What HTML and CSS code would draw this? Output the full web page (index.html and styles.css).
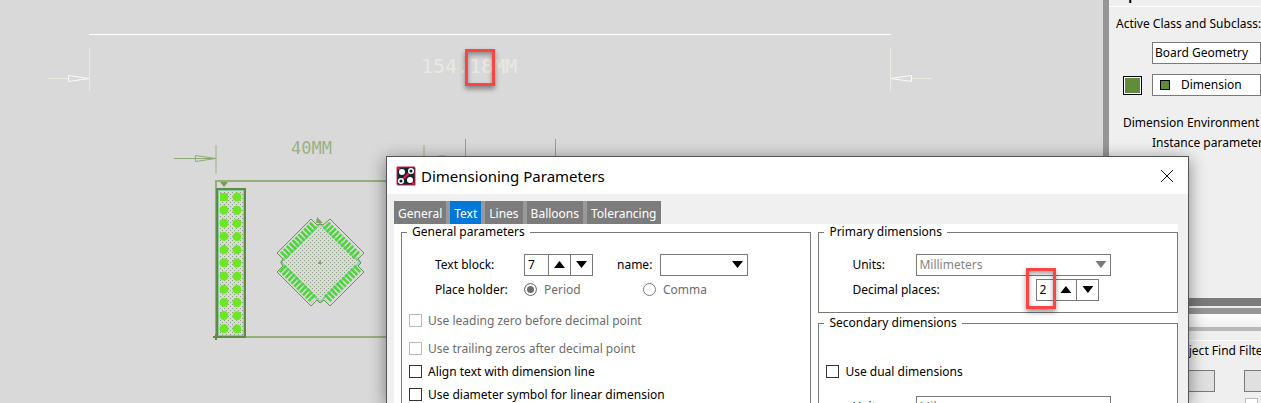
FILE: index.html
```
<!DOCTYPE html>
<html lang="en">
<head>
  <meta charset="UTF-8" />
  <meta name="viewport" content="width=device-width, initial-scale=1.0" />
  <title>Dimensioning Parameters</title>
  <link rel="stylesheet" href="styles.css">
</head>
<body>
  <main class="workspace" aria-label="Board canvas">
    <svg class="board" width="1105" height="403" viewBox="0 0 1105 403" fill="none">
      <defs>
        <pattern id="dots" width="4" height="4" patternUnits="userSpaceOnUse">
          <rect width="1" height="1" fill="#8b9f80" />
          <rect x="2" y="2" width="1" height="1" fill="#8b9f80" />
        </pattern>
      </defs>

      <!-- overall dimension -->
      <path d="M89 34.5H891" stroke="#fff" />
      <path d="M89.5 48V91M890.5 48V91M48 78.5H68M912 78.5H932" stroke="#ebebe2" />
      <path d="M68.500 75.500V81.500L89 78.500ZM911.500 75.500V81.500L891 78.500Z" stroke="#fbfbf8" />
      <text class="dim-text" x="421" y="73">154.18MM</text>

      <!-- 40MM dimension -->
      <path d="M216 145V174M424 145V175" stroke="#b9c7ab" stroke-width="2" />
      <path d="M174 158.500H216M195.500 155.500V161.500L216 158.500ZM465.500 139V180M555.500 139V180" stroke="#8fab75" />
      <path d="M434 157L440 156H446" stroke="#8fab75" />
      <text class="dim-text dim-small" x="291" y="154">40MM</text>

      <!-- board outline -->
      <path d="M600 181H216V337H600" stroke="#96b07c" stroke-width="2" />

      <!-- connector -->
      <path d="M220 182H228L224 187Z" fill="#789c5c" />
      <rect x="217" y="189" width="28" height="148" fill="url(#dots)" stroke="#618b45" stroke-width="2" />
      <rect x="218.500" y="190.500" width="25" height="145" stroke="#86c9a3" />
      <rect x="220" y="193" width="8" height="8" fill="#6be823" />
      <path d="M224 210V334" stroke="#6be823" stroke-width="9" stroke-linecap="round" stroke-dasharray="0 13.200" />
      <path d="M237 197V334" stroke="#6be823" stroke-width="9" stroke-linecap="round" stroke-dasharray="0 13.200" />
      <path d="M213 337H219M216 334V340" stroke="#618b45" stroke-width="2" />

      <!-- QFP package -->
      <path d="M320 224L360 262L320 302L281 262Z" fill="url(#dots)" stroke="#8fd2ae" stroke-width="2" />
      <g stroke="#4fd43c" stroke-width="9" stroke-dasharray="2.600 1.500">
        <path d="M314 225L282 257" />
        <path d="M326 225L358 257" />
        <path d="M282 268L314 300" />
        <path d="M358 268L326 300" />
      </g>
      <path d="M311 219L317 225L320 224L323 225L330 219L364 253L358 259L361 263L358 266L364 272L330 306L324 300L320 303L317 300L311 306L277 272L283 266L281 263L283 259L277 253Z" stroke="#6b9150" />
      <path d="M317 217L323 223L316 223ZM320 260L322 264H318Z" fill="#82a26a" />
    </svg>
    <span class="callout callout-value"></span>
  </main>

  <aside class="sidebar">
    <h2 class="panel-title">Options</h2>
    <section class="options">
      <p>Active Class and Subclass:</p>
      <div class="picker">
        <span class="select-box">
          <select aria-label="Active class"><option>Board Geometry</option></select>
        </span>
      </div>
      <div class="picker">
        <button class="swatch" aria-label="Subclass colour"></button>
        <span class="select-box with-chip">
          <select aria-label="Active subclass"><option>Dimension</option></select>
          <i class="chip"></i>
        </span>
      </div>
      <div class="environment">
        <p>Dimension Environment</p>
        <p class="indent">Instance parameters:</p>
      </div>
    </section>
    <div class="splitter"></div>
    <div class="splitter-thin"></div>
    <div class="panel-tab"></div>
    <section class="find">
      <p>Object Find Filter</p>
      <div class="find-actions">
        <button aria-label="All on"></button>
        <button aria-label="All off"></button>
      </div>
      <input class="find-check" type="checkbox" aria-label="Groups" />
    </section>
  </aside>

  <section class="dialog" role="dialog" aria-labelledby="dialogTitle">
    <header class="titlebar">
      <svg class="app-icon" width="20" height="20" viewBox="0 0 20 20">
        <rect x="1" y="1" width="18" height="18" rx="1" fill="#0b2836" stroke="#d7203f" />
        <path d="M1 1L5 5M15 15L19 19M7 13L13 7" stroke="#e31b3d" stroke-width="2" />
        <circle cx="6" cy="6" r="3" fill="#fff" />
        <circle cx="14" cy="14" r="3" fill="#fff" />
        <circle cx="15" cy="5" r="2.300" fill="#0b2836" stroke="#fff" stroke-width="1.500" />
        <circle cx="5" cy="15" r="2.300" fill="#0b2836" stroke="#fff" stroke-width="1.500" />
      </svg>
      <h1 id="dialogTitle">Dimensioning Parameters</h1>
      <button class="close" aria-label="Close">
        <svg width="12" height="12" viewBox="0 0 12 12"><path d="M0 0L12 12M12 0L0 12" stroke="#111" /></svg>
      </button>
    </header>

    <div class="dialog-body">
      <nav class="tabs" role="tablist">
        <button role="tab">General</button>
        <button role="tab" class="active" aria-selected="true">Text</button>
        <button role="tab">Lines</button>
        <button role="tab">Balloons</button>
        <button role="tab">Tolerancing</button>
      </nav>

      <div class="tab-page">
        <fieldset class="general">
          <legend>General parameters</legend>
          <div class="row first">
            <label class="caption" for="textBlock">Text block:</label>
            <span class="spinner">
              <input id="textBlock" type="text" value="7" />
              <button aria-label="Increase text block"><i class="tri up"></i></button>
              <button aria-label="Decrease text block"><i class="tri"></i></button>
            </span>
            <label class="name-label" for="blockName">name:</label>
            <span class="select-box arrow name-select">
              <select id="blockName"><option></option></select>
              <i class="tri"></i>
            </span>
          </div>
          <div class="row">
            <span class="caption">Place holder:</span>
            <label class="radio"><input type="radio" name="holder" checked disabled />Period</label>
            <label class="radio"><input type="radio" name="holder" disabled />Comma</label>
          </div>
          <div class="checks">
            <label class="check spaced"><input type="checkbox" disabled />Use leading zero before decimal point</label>
            <label class="check"><input type="checkbox" disabled />Use trailing zeros after decimal point</label>
            <label class="check"><input type="checkbox" />Align text with dimension line</label>
            <label class="check"><input type="checkbox" />Use diameter symbol for linear dimension</label>
          </div>
        </fieldset>

        <div class="column">
          <fieldset class="primary">
            <legend>Primary dimensions</legend>
            <div class="row first">
              <label class="caption" for="units">Units:</label>
              <span class="select-box arrow units">
                <select id="units" disabled><option>Millimeters</option></select>
                <i class="tri"></i>
              </span>
            </div>
            <div class="row">
              <label class="caption wide" for="places">Decimal places:</label>
              <span class="spinner narrow">
                <input id="places" type="text" value="2" />
                <button aria-label="Increase decimal places"><i class="tri up"></i></button>
                <button aria-label="Decrease decimal places"><i class="tri"></i></button>
                <span class="callout callout-places"></span>
              </span>
            </div>
          </fieldset>
          <fieldset class="secondary">
            <legend>Secondary dimensions</legend>
            <label class="check"><input type="checkbox" />Use dual dimensions</label>
            <div class="row">
              <label class="caption" for="units2">Units:</label>
              <span class="select-box arrow units">
                <select id="units2" disabled><option>Mils</option></select>
                <i class="tri"></i>
              </span>
            </div>
          </fieldset>
        </div>
      </div>
    </div>
  </section>
</body>
</html>
```
FILE: styles.css
```
:root {
  --canvas: #d9d9d9;
  --panel: #efefef;
  --line: #7a7a7a;
  --muted: #6d6d6d;
  --tab: #7c7c7c;
  --accent: #0078d7;
  --callout: #fb4444;
  --green: #628b3a;
}
* {
  box-sizing: border-box;
  margin: 0;
  padding: 0;
}
body {
  position: relative;
  display: flex;
  height: 100vh;
  overflow: hidden;
  background-color: var(--canvas);
  color: #000;
  font-family: "Noto Sans", sans-serif;
  font-size: 12px;
  line-height: 16px;
  white-space: nowrap;
}
button,
input,
select {
  font: inherit;
  color: inherit;
}
button,
select,
input {
  appearance: none;
  border: 1px solid var(--line);
  border-radius: 0;
  background-color: #fff;
}

/* board canvas */
.workspace {
  position: relative;
  flex: 1;
  min-width: 0;
  overflow: hidden;
}
.board {
  display: block;
}
.dim-text {
  font-family: "DejaVu Sans Mono", monospace;
  font-size: 20px;
  font-weight: 200;
  fill: #e9e9e2;
}
.dim-small {
  font-size: 17px;
  fill: #9bb286;
}
.callout {
  position: absolute;
  border: 3px solid var(--callout);
  box-shadow: 0 3px 5px rgba(0, 0, 0, 0.4), inset 0 3px 5px rgba(0, 0, 0, 0.35);
  pointer-events: none;
}
.callout-value {
  left: 465px;
  top: 49px;
  width: 30px;
  height: 37px;
}
.callout-places {
  left: -10px;
  top: -11px;
  width: 30px;
  height: 41px;
}

/* right hand panels */
.sidebar {
  display: flex;
  flex-direction: column;
  width: 158px;
  overflow: hidden;
  border-left: 6px solid #969696;
  background-color: var(--panel);
}
.panel-title {
  display: flex;
  align-items: flex-end;
  flex: none;
  height: 7px;
  padding: 0 0 3px 9px;
  border-bottom: 1px solid #fff;
  font-size: 13px;
}
.options {
  display: flex;
  flex-direction: column;
  gap: 10px;
  flex: none;
  height: 291px;
  padding: 9px 0 0 7px;
}
.picker {
  display: flex;
  align-items: center;
  justify-content: flex-end;
  gap: 10px;
}
.picker .select-box {
  width: 109px;
}
.swatch {
  width: 19px;
  height: 19px;
  border: 1px solid #000;
  background-color: var(--green);
  box-shadow: inset 0 0 0 1px #fff;
}
.chip {
  width: 10px;
  height: 10px;
  margin-left: 8px;
  border: 1px solid #000;
  background-color: var(--green);
}
.environment {
  padding: 7px 0 0 7px;
}
.environment p {
  line-height: 20px;
}
.indent {
  padding-left: 29px;
}
.splitter {
  flex: none;
  height: 8px;
  background-color: #7b7b7b;
}
.splitter-thin {
  flex: none;
  height: 8px;
  border-top: 2px solid #eee;
  background-color: #969696;
}
.panel-tab {
  flex: none;
  height: 17px;
  border-bottom: 4px solid #b9b9b9;
  background-image: linear-gradient(#fff, #f0f0f0);
}
.find {
  margin-top: 9px;
  padding: 2px 0 0 63px;
  border-top: 1px solid #fff;
}
.find-actions {
  display: flex;
  gap: 29px;
  padding: 11px 0 6px;
}
.find-actions button {
  flex: none;
  width: 43px;
  height: 22px;
  background-color: #e0e0e0;
}
.find-check {
  width: 13px;
  height: 13px;
  margin-left: 73px;
  border-color: #bbb;
}

/* dialog window */
.dialog {
  position: absolute;
  left: 386px;
  right: 72px;
  top: 156px;
  bottom: 0;
  display: flex;
  flex-direction: column;
  overflow: hidden;
  border: 1px solid #555;
  border-bottom: 0;
  background-color: #f0f0f0;
  box-shadow: 0 3px 16px rgba(0, 0, 0, 0.45);
}
.titlebar {
  display: flex;
  align-items: center;
  flex: none;
  height: 37px;
  padding: 0 15px 0 9px;
  gap: 5px;
  background-color: #fff;
}
.titlebar h1 {
  flex: 1;
  font-size: 15px;
  font-weight: 400;
}
.close {
  display: flex;
  border: 0;
}
.dialog-body {
  flex: 1;
  padding: 7px 10px 0 7px;
}
.tabs {
  display: flex;
  gap: 4px;
  width: fit-content;
  background-color: #999;
}
.tabs button {
  height: 23px;
  padding: 2px 4px 0;
  border: 0;
  background-color: var(--tab);
  color: #fff;
}
.tabs .active {
  background-color: var(--accent);
}
.tab-page {
  display: flex;
  gap: 7px;
  height: 500px;
  padding-left: 7px;
  background-color: #fff;
}
fieldset {
  min-width: 0;
  border: 1px solid var(--line);
}
legend {
  margin-left: 5px;
  padding: 0 5px;
}
.general {
  flex: 410;
}
.column {
  flex: 361;
}
.row {
  display: flex;
  align-items: center;
  height: 25px;
  padding-left: 33px;
}
.first {
  margin-top: 12px;
}
.caption {
  width: 89px;
}
.column .caption {
  width: 64px;
}
.column .wide {
  width: 184px;
}
.spinner {
  position: relative;
  display: flex;
}
.spinner input {
  width: 25px;
  height: 22px;
  padding-left: 3px;
}
.narrow input {
  width: 19px;
  padding-left: 2px;
}
.spinner button {
  display: grid;
  place-items: center;
  width: 22px;
  border-left: 0;
}
.tri {
  width: 11px;
  height: 7px;
  background-color: #000;
  clip-path: polygon(0 0, 100% 0, 50% 100%);
}
.up {
  clip-path: polygon(50% 0, 100% 100%, 0 100%);
}
.name-label {
  width: 43px;
  margin-left: 24px;
}
.select-box {
  display: grid;
  align-items: center;
}
.select-box > * {
  grid-area: 1 / 1;
}
.select-box select {
  width: 100%;
  height: 22px;
  padding-left: 2px;
}
.with-chip select {
  padding-left: 28px;
}
.select-box .tri {
  justify-self: end;
  margin-right: 5px;
  pointer-events: none;
}
.name-select {
  width: 88px;
}
.units {
  width: 195px;
}
select:disabled {
  color: #858585;
  opacity: 1;
}
select:disabled + .tri {
  background-color: var(--line);
}
.radio {
  display: flex;
  align-items: center;
  gap: 7px;
  width: 119px;
  color: var(--muted);
}
.radio input {
  width: 13px;
  height: 13px;
  border-radius: 50%;
}
.radio input:checked {
  background-color: var(--muted);
  box-shadow: inset 0 0 0 2px #fff;
}
.checks {
  padding-top: 7px;
}
.check {
  display: flex;
  align-items: center;
  gap: 6px;
  height: 23px;
  padding-left: 7px;
}
.spaced {
  margin-bottom: 5px;
}
.check input {
  width: 13px;
  height: 13px;
  border-color: #333;
}
.check:has(:disabled) {
  color: var(--muted);
}
.check input:disabled {
  border-color: #bbb;
}
.primary {
  height: 89px;
}
.secondary {
  margin-top: 2px;
}
.secondary .check {
  margin: 29px 0 11px;
}
```
